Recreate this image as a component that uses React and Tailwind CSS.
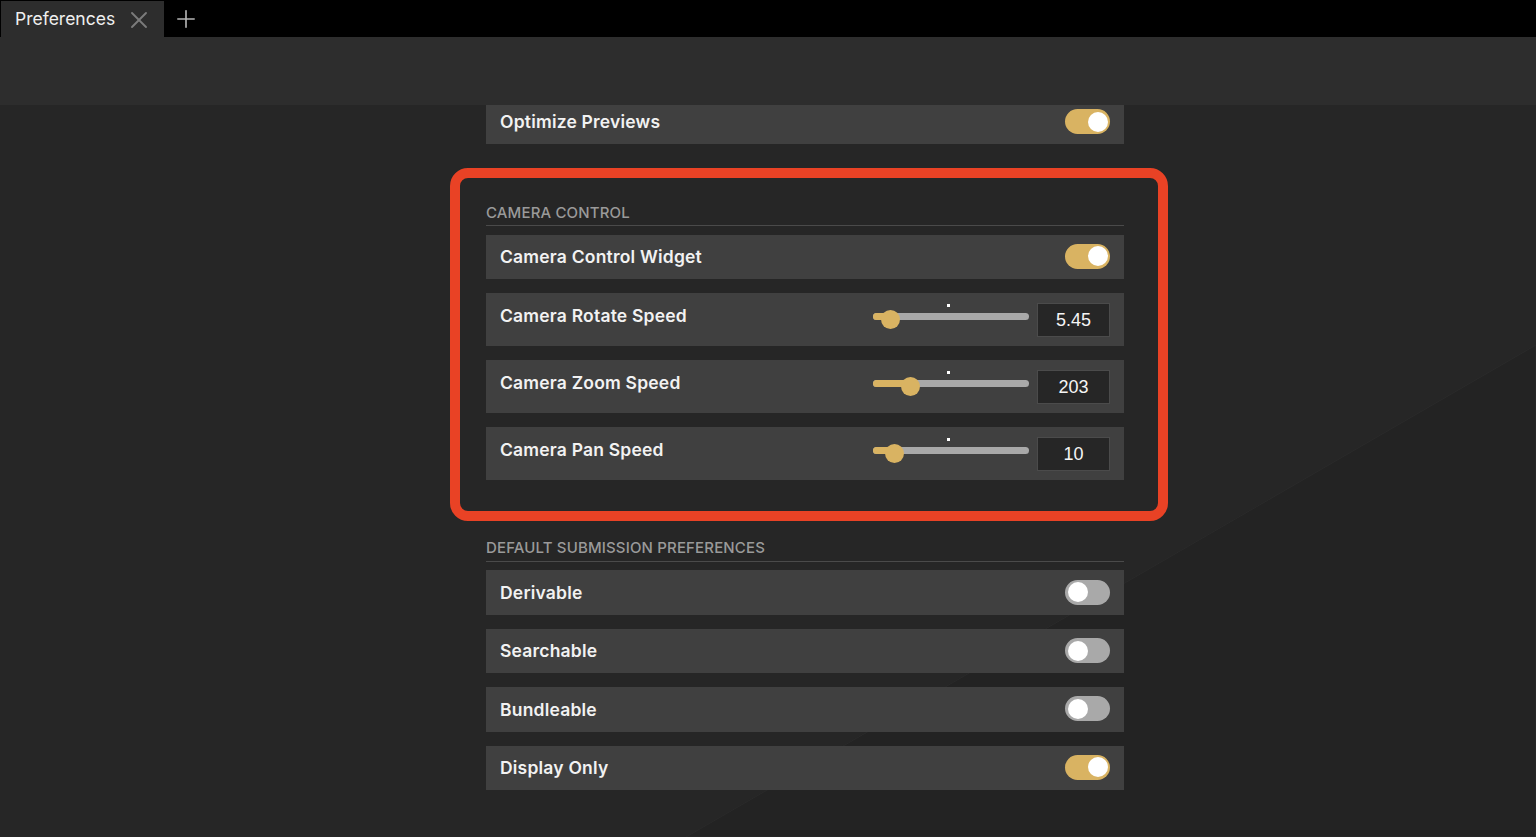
import { Plus, X } from 'lucide-react';

const labelFont = "font-['Inter','Noto_Sans',sans-serif]";

const Toggle = ({ on }) => {
  return (
    <div
      className={`mb-[1px] flex h-[25px] w-[45px] shrink-0 items-center rounded-full px-[2.5px] ${
        on ? 'justify-end bg-[#d9b362]' : 'justify-start bg-[#a9a9a9]'
      }`}
    >
      <div className="h-[20px] w-[20px] rounded-full bg-white" />
    </div>
  );
};

const ToggleRow = ({ label, on }) => {
  return (
    <div className="flex h-[44.5px] items-center justify-between bg-[#404040] pl-[14px] pr-[14px]">
      <span className="pt-[1px] text-[17.5px] font-semibold tracking-[0.2px] text-[#f2f2f2]">{label}</span>
      <Toggle on={on} />
    </div>
  );
};

const SliderRow = ({ label, value, thumb }) => {
  return (
    <div className="flex h-[53.2px] justify-between bg-[#404040] pl-[14px] pr-[14px]">
      <span className="mt-[11px] text-[17.5px] font-semibold leading-[24px] tracking-[0.2px] text-[#f2f2f2]">
        {label}
      </span>
      <div className="flex items-start">
        <div className="relative mr-[8px] mt-[20.5px] h-[7px] w-[156px] rounded-full bg-[#a9a9a9]">
          <div className="absolute left-[73.5px] top-[-9.5px] h-[3px] w-[3px] bg-white" />
          <div className="absolute left-0 top-0 h-[7px] rounded-full bg-[#d9b362]" style={{ width: thumb }} />
          <div
            className="absolute top-[-3px] h-[19px] w-[19px] rounded-full bg-[#d9b362]"
            style={{ left: thumb - 9.5 }}
          />
        </div>
        <div className="mt-[10px] flex h-[34px] w-[73px] items-center justify-center border border-[#4b4b4b] bg-[#262626] pt-[1px] font-['Liberation_Sans',sans-serif] text-[18px] text-[#f5f5f5]">
          {value}
        </div>
      </div>
    </div>
  );
};

const SectionTitle = ({ children }) => {
  return (
    <div className="mb-[8.5px] mt-[55.5px] flex h-[26.5px] items-center border-b border-[#4a4a4a] pt-[1px] text-[15px] font-medium tracking-[0.15px] text-[#9a9a9a]">
      {children}
    </div>
  );
};

const App = () => {
  return (
    <div className={`relative flex h-[837px] w-full flex-col overflow-hidden bg-[#262626] ${labelFont}`}>
      <div className="flex h-[37px] shrink-0 items-end bg-black pl-[1px]">
        <div className="flex h-[36px] w-[163px] items-center bg-[#2d2d2d] pl-[14px] pt-[1px]">
          <span className="text-[17.5px] text-[#efefef]">Preferences</span>
          <X className="ml-[10px] h-[28px] w-[28px] text-[#7b7b7b]" strokeWidth={1.6} />
        </div>
        <Plus className="mb-[4px] ml-[8px] h-[28px] w-[28px] text-[#b5b5b5]" strokeWidth={1.4} />
      </div>
      <div className="h-[68px] shrink-0 bg-[#2d2d2d]" />

      <div className="relative flex-1 overflow-hidden">
        <svg className="absolute inset-0 h-full w-full" viewBox="0 0 1536 732" preserveAspectRatio="none">
          <polygon points="1536,240 686,732 1536,732" fill="#232323" stroke="#2a2a2a" />
        </svg>
        <div className="relative ml-[486px] w-[638px]">
          <div className="-mt-[5px] flex h-[44px] items-center justify-between bg-[#404040] pl-[14px] pr-[14px]">
            <span className="pt-[1px] text-[17.5px] font-semibold tracking-[0.2px] text-[#f2f2f2]">
              Optimize Previews
            </span>
            <Toggle on />
          </div>

          <SectionTitle>CAMERA CONTROL</SectionTitle>
          <div className="flex flex-col gap-[13.8px]">
            <ToggleRow label="Camera Control Widget" on />
            <SliderRow label="Camera Rotate Speed" value="5.45" thumb={17} />
            <SliderRow label="Camera Zoom Speed" value="203" thumb={37.5} />
            <SliderRow label="Camera Pan Speed" value="10" thumb={21} />
          </div>

          <SectionTitle>DEFAULT SUBMISSION PREFERENCES</SectionTitle>
          <div className="flex flex-col gap-[13.9px]">
            <ToggleRow label="Derivable" />
            <ToggleRow label="Searchable" />
            <ToggleRow label="Bundleable" />
            <ToggleRow label="Display Only" on />
          </div>
        </div>
      </div>

      {/* red highlight drawn over the page */}
      <div className="absolute left-[450px] top-[168px] h-[353px] w-[718px] rounded-[18px] border-[10.5px] border-[#e94225]" />
    </div>
  );
};

export default App;
